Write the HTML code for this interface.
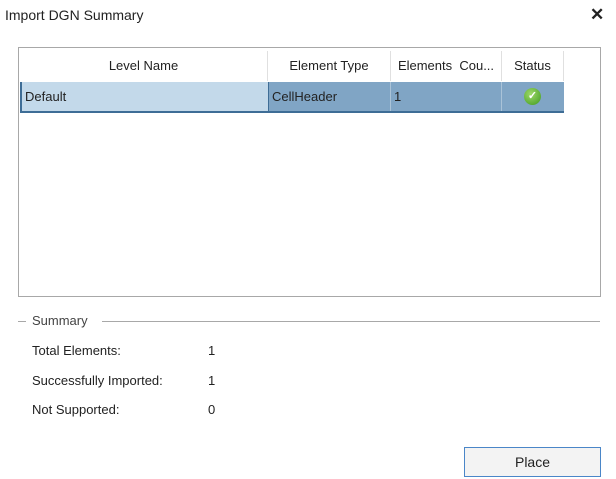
<!DOCTYPE html>
<html><head><style>
body{margin:0;width:616px;height:479px;background:#fff;font-family:"Liberation Sans",sans-serif;font-size:13px;color:#222;position:relative;overflow:hidden}
.a{position:absolute;white-space:nowrap}
.box{position:absolute;left:18px;top:47px;width:581px;height:248px;border:1px solid #a8a8a8}
.h{position:absolute;top:3px;height:30px;line-height:30px;text-align:center;border-right:1px solid #e0e0e0}
.c{position:absolute;top:34px;height:29px;line-height:29px;padding-left:3px;box-sizing:border-box}
</style></head><body>
<div class="a" style="left:5px;top:7px;font-size:14px">Import DGN Summary</div>
<div class="a" style="left:590px;top:5px;font-size:17px;font-weight:bold">✕</div>
<div class="box">
<div class="h" style="left:1px;width:247px">Level Name</div>
<div class="h" style="left:249px;width:122px">Element Type</div>
<div class="h" style="left:372px;width:110px">Elements&nbsp; Cou...</div>
<div class="h" style="left:483px;width:61px">Status</div>
<div class="c" style="left:1px;width:248px;background:#c3d9ea;border-left:2px solid #3e6d96">Default</div>
<div class="c" style="left:249px;width:123px;background:#80a5c5;border-left:1px solid #3e6d96;border-right:1px solid #aac3d8">CellHeader</div>
<div class="c" style="left:372px;width:111px;background:#80a5c5;border-right:1px solid #aac3d8">1</div>
<div class="c" style="left:483px;width:62px;background:#80a5c5"><div style="position:absolute;left:22px;top:6px;width:17px;height:17px;border-radius:50%;background:radial-gradient(circle at 40% 35%,#9ed86a,#3f9a1e);color:#fff;font-size:11px;line-height:17px;text-align:center;font-weight:bold">✓</div></div>
<div style="position:absolute;left:1px;top:63px;width:544px;height:2px;background:#3e6d96"></div>
</div>
<div style="position:absolute;left:18px;top:321px;width:8px;border-top:1px solid #a8a8a8"></div>
<div class="a" style="left:32px;top:313px;color:#444">Summary</div>
<div style="position:absolute;left:102px;top:321px;width:498px;border-top:1px solid #a8a8a8"></div>
<div class="a" style="left:32px;top:343px">Total Elements:</div><div class="a" style="left:208px;top:343px">1</div>
<div class="a" style="left:32px;top:373px">Successfully Imported:</div><div class="a" style="left:208px;top:373px">1</div>
<div class="a" style="left:32px;top:402px">Not Supported:</div><div class="a" style="left:208px;top:402px">0</div>
<div style="position:absolute;left:464px;top:447px;width:135px;height:28px;border:1px solid #4a86c8;background:#f3f3f3;text-align:center;line-height:28px;font-size:14px">Place</div>
</body></html>
